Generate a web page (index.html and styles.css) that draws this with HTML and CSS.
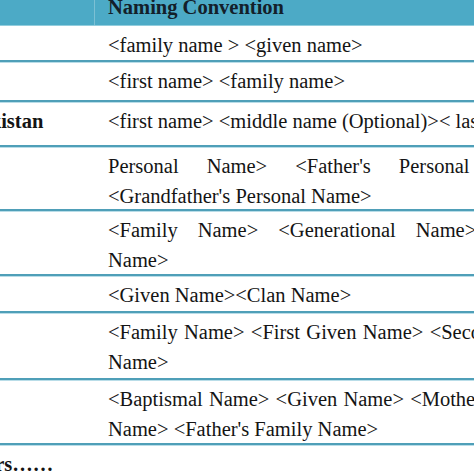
FILE: index.html
```html
<!DOCTYPE html>
<html>
<head>
<meta charset="utf-8">
<link rel="stylesheet" href="styles.css">
</head>
<body>
<div class="table">
  <div class="row head">
    <div class="cell left head-left"></div>
    <div class="cell right">Naming Convention</div>
  </div>
  <div class="row r1">
    <div class="cell left"></div>
    <div class="cell right">&lt;family name &gt; &lt;given name&gt;</div>
  </div>
  <div class="row r2">
    <div class="cell left"></div>
    <div class="cell right">&lt;first name&gt; &lt;family name&gt;</div>
  </div>
  <div class="row r3">
    <div class="cell left country">Pakistan</div>
    <div class="cell right">&lt;first name&gt; &lt;middle name (Optional)&gt;&lt; last name&gt;</div>
  </div>
  <div class="row r4">
    <div class="cell left"></div>
    <div class="cell right">Personal Name&gt; &lt;Father's Personal Name&gt; &lt;Grandfather's Personal Name&gt;</div>
  </div>
  <div class="row r5">
    <div class="cell left"></div>
    <div class="cell right">&lt;Family Name&gt; &lt;Generational Name&gt; &lt;Given Name&gt;</div>
  </div>
  <div class="row r6">
    <div class="cell left"></div>
    <div class="cell right">&lt;Given Name&gt;&lt;Clan Name&gt;</div>
  </div>
  <div class="row r7">
    <div class="cell left"></div>
    <div class="cell right">&lt;Family Name&gt; &lt;First Given Name&gt; &lt;Second Given Name&gt;</div>
  </div>
  <div class="row r8">
    <div class="cell left"></div>
    <div class="cell right">&lt;Baptismal Name&gt; &lt;Given Name&gt; &lt;Mother's Family Name&gt; &lt;Father's Family Name&gt;</div>
  </div>
  <div class="row r9">
    <div class="cell left country others">Others……</div>
    <div class="cell right"></div>
  </div>
</div>
</body>
</html>
```

FILE: styles.css
```css
html, body {
  margin: 0;
  padding: 0;
  background: #ffffff;
  overflow: hidden;
  width: 474px;
  height: 474px;
}

.table {
  margin-left: -45px;
  margin-top: -8px;
  width: 603px;
  font-family: "Liberation Serif", "Times New Roman", serif;
  font-size: 20.5px;
  line-height: 30px;
  color: #141414;
}

.row {
  display: grid;
  grid-template-columns: 140px 463px;
  box-sizing: border-box;
  border-top: 2px solid #4f9fb8;
  box-shadow: inset 0 1px 0 #b9dde8;
}

.cell {
  box-sizing: border-box;
  padding-top: 4px;
}

.left {
  padding-left: 12px;
}

.right {
  padding-left: 13px;
  text-align: justify;
}

.country {
  font-weight: bold;
}

.others {
  padding-left: 0;
  text-indent: -3px;
}

.head {
  height: 34px;
  border-top: none;
  box-shadow: none;
  background: #4caac6;
  border-bottom: 1px solid #92cddd;
  font-weight: bold;
  color: #13202a;
}

.head .cell {
  padding-top: 0;
}

.head-left {
  border-right: 1px solid #7cc0d4;
}

.r1 { height: 34px; border-top: none; box-shadow: none; }
.r2 { height: 40px; }
.r3 { height: 45px; }
.r4 { height: 64px; }
.r5 { height: 65px; }
.r6 { height: 37px; }
.r7 { height: 67px; }
.r8 { height: 65px; }
.r9 { height: 40px; }
```
